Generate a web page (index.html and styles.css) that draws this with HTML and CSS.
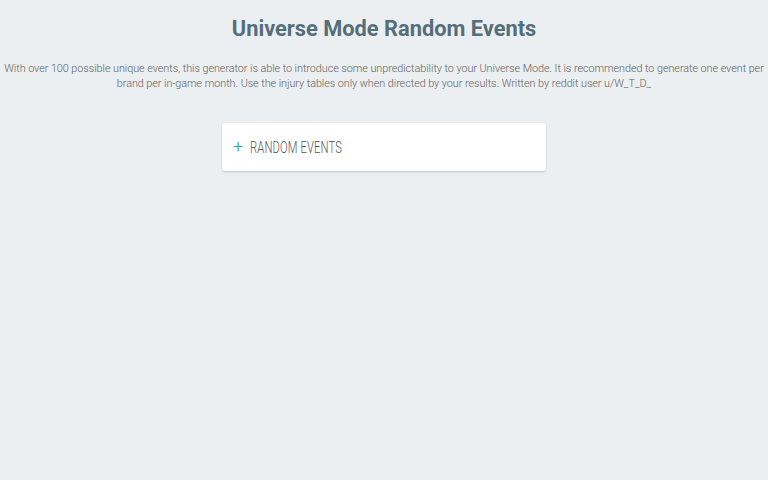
FILE: index.html
```html
<!DOCTYPE html>
<html>
<head>
<meta charset="utf-8">
<link rel="stylesheet" href="styles.css">
</head>
<body>
<header class="intro">
  <h1 class="title">Universe Mode Random Events</h1>
  <p class="desc">With over 100 possible unique events, this generator is able to introduce some unpredictability to your Universe Mode. It is recommended to generate one event per brand per in-game month. Use the injury tables only when directed by your results. Written by reddit user u/W_T_D_</p>
</header>
<main class="content">
  <div class="card">
    <span class="plus">+</span>
    <span class="card-title">RANDOM EVENTS</span>
  </div>
</main>
</body>
</html>
```

FILE: styles.css
```css
html, body {
  margin: 0;
  padding: 0;
  background: #eceff1;
  height: 100%;
}
body {
  font-family: Roboto, "Liberation Sans", sans-serif;
}
.intro {
  text-align: center;
  padding-top: 15px;
}
.title {
  margin: 0;
  font-size: 21.8px;
  font-weight: 700;
  color: #546e7a;
  line-height: 28px;
}
.desc {
  margin: 18px 0 0;
  padding: 0;
  font-size: 10.8px;
  font-weight: 300;
  color: #616161;
  line-height: 15px;
  letter-spacing: -0.04px;
}
.content {
  display: flex;
  justify-content: center;
  padding-top: 32px;
}
.card {
  width: 324px;
  height: 48px;
  background: #fff;
  border-radius: 3px;
  box-shadow: 0 1px 2px rgba(0,0,0,0.18);
  display: flex;
  align-items: center;
  padding-left: 11px;
  box-sizing: border-box;
  gap: 7px;
}
.plus {
  color: #26a69a;
  font-size: 18px;
  font-weight: 300;
  line-height: 1;
}
.card-title {
  font-family: Roboto, sans-serif;
  font-weight: 300;
  font-size: 16px;
  color: #555;
  display: inline-block;
  transform: scaleX(0.70);
  transform-origin: left center;
  letter-spacing: 0.2px;
}
```
